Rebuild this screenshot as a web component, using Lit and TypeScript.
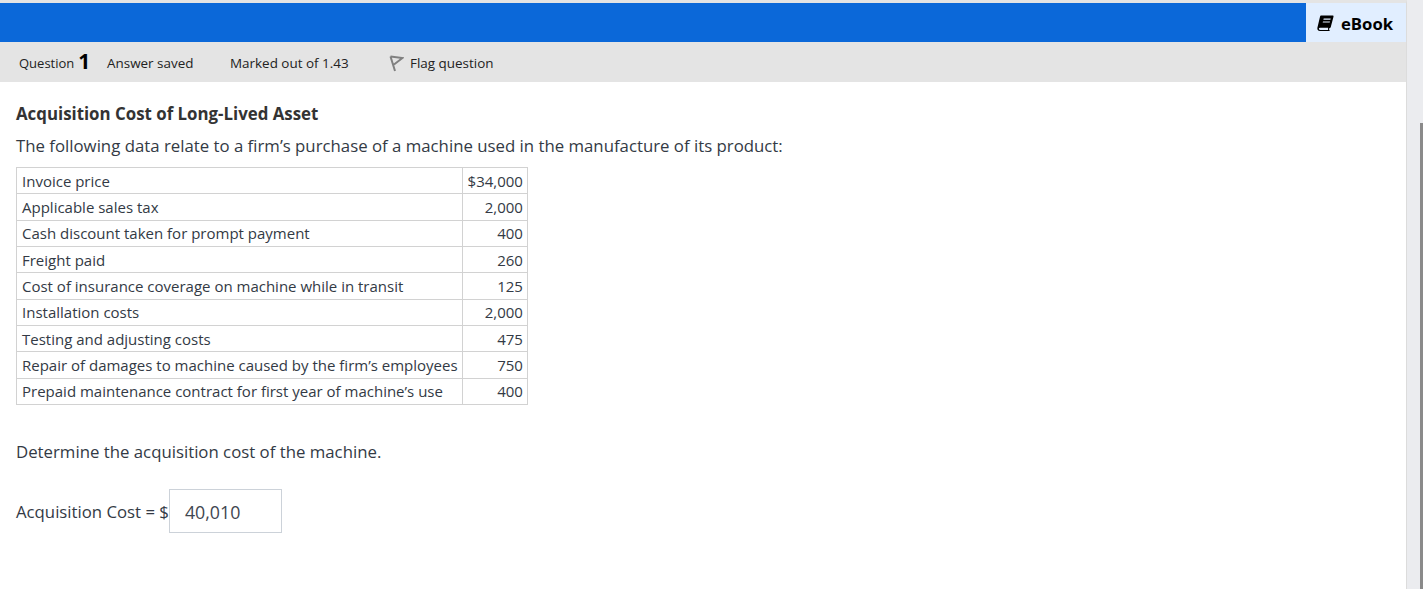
import { LitElement, html, css } from "lit";
import { customElement } from "lit/decorators.js";

const ROWS: [string, string][] = [
  ["Invoice price", "$34,000"],
  ["Applicable sales tax", "2,000"],
  ["Cash discount taken for prompt payment", "400"],
  ["Freight paid", "260"],
  ["Cost of insurance coverage on machine while in transit", "125"],
  ["Installation costs", "2,000"],
  ["Testing and adjusting costs", "475"],
  ["Repair of damages to machine caused by the firm’s employees", "750"],
  ["Prepaid maintenance contract for first year of machine’s use", "400"],
];

@customElement("app-root")
export class AppRoot extends LitElement {
  static styles = css`
    :host {
      display: block;
      height: 589px;
      overflow: hidden;
      background: #ebecef;
      font-family: "Open Sans", sans-serif;
      position: relative;
    }
    .page {
      width: 1406px;
      height: 589px;
      box-sizing: content-box;
      border-right: 1px solid #dcdcdc;
      border-top: 3px solid #e4e4e4;
      background: #fff;
    }
    .thumb {
      position: absolute;
      right: 0;
      top: 123px;
      width: 3px;
      height: 466px;
      background: #8a8a8a;
    }
    .blue {
      height: 39px;
      background: #0b68d9;
      display: flex;
      justify-content: flex-end;
    }
    .ebook {
      width: 100px;
      background: #e1eeff;
      display: flex;
      align-items: center;
      gap: 7px;
      padding: 1px 0 0 11px;
      box-sizing: border-box;
      color: #000;
      font-size: 16.7px;
      font-weight: 700;
    }
    .ebook svg {
      width: 17px;
      height: 16px;
    }
    .bar {
      height: 40px;
      box-sizing: border-box;
      padding: 2px 0 0 19px;
      background: #e4e4e4;
      display: flex;
      align-items: center;
      color: #222;
      font-size: 13.45px;
    }
    .q {
      display: flex;
      align-items: center;
      width: 88px;
      font-size: 13px;
    }
    .q b {
      font-size: 21px;
      font-weight: 700;
      color: #000;
      margin-left: 4px;
      line-height: 20px;
      position: relative;
      top: -2px;
    }
    .saved {
      width: 123px;
    }
    .marked {
      width: 159px;
    }
    .flag {
      display: flex;
      align-items: center;
      gap: 6px;
    }
    .flag svg {
      width: 15px;
      height: 17px;
    }
    .content {
      padding: 21px 0 0 16px;
      color: #333a45;
    }
    h2 {
      margin: 0;
      font-size: 16.85px;
      line-height: 22px;
      font-weight: 700;
      color: #333;
    }
    p {
      margin: 0;
      font-size: 16.8px;
      line-height: 24px;
    }
    .intro {
      margin-top: 9px;
    }
    table {
      border-collapse: collapse;
      margin-top: 9px;
      font-size: 15px;
    }
    td {
      border: 1px solid #d2d2d2;
      height: 26.35px;
      padding: 0 4px 0 5px;
      line-height: 20px;
      box-sizing: border-box;
      white-space: nowrap;
    }
    td.n {
      text-align: right;
      width: 65px;
    }
    .det {
      margin-top: 35px;
    }
    .answer {
      margin-top: 25px;
      display: flex;
      align-items: center;
      font-size: 16.75px;
    }
    .box {
      width: 113px;
      height: 44px;
      box-sizing: border-box;
      border: 1px solid #ccd2d9;
      padding: 1px 0 0 15px;
      display: flex;
      align-items: center;
      font-size: 17.8px;
      color: #3f4650;
    }
  `;

  render() {
    return html`
      <div class="page">
        <div class="blue">
          <div class="ebook">
            <svg viewBox="0 0 17 16" aria-hidden="true">
              <path
                fill="#000"
                d="M4.200.5H15.600c.7 0 1.100.5.9 1.200L13.700 12.200c-.1.5-.5.7-.9.8-.7.2-.9 1.300-.5 1.900h.3v1H3c-2 0-3-1.400-2.600-3.200L3 1.800C3.200 1 3.600.5 4.200.5Z"
              />
              <path
                fill="#e1eeff"
                d="M6.700 3.600h7l-.3 1.200h-7ZM6 6.400h7l-.3 1.200h-7ZM3 12.800h8.200c-.3.800-.3 1.500 0 2.100H3c-1.500 0-1.500-2.100 0-2.100Z"
              />
            </svg>
            <span>eBook</span>
          </div>
        </div>
        <div class="bar">
          <div class="q"><span>Question</span><b>1</b></div>
          <div class="saved">Answer saved</div>
          <div class="marked">Marked out of 1.43</div>
          <div class="flag">
            <svg viewBox="0 0 15 17" aria-hidden="true">
              <path
                fill="none"
                stroke="#808080"
                stroke-width="2"
                d="M1.500 1.500 6 16M1.500 1.500 13.500 3 5 9.500"
              />
            </svg>
            <span>Flag question</span>
          </div>
        </div>
        <div class="content">
          <h2>Acquisition Cost of Long-Lived Asset</h2>
          <p class="intro">The following data relate to a firm’s purchase of a machine used in the manufacture of its product:</p>
          <table>
            ${ROWS.map(
              ([a, b]) => html`<tr><td>${a}</td><td class="n">${b}</td></tr>`
            )}
          </table>
          <p class="det">Determine the acquisition cost of the machine.</p>
          <div class="answer">
            <span>Acquisition Cost = $</span>
            <div class="box">40,010</div>
          </div>
        </div>
      </div>
      <div class="thumb"></div>
    `;
  }
}
